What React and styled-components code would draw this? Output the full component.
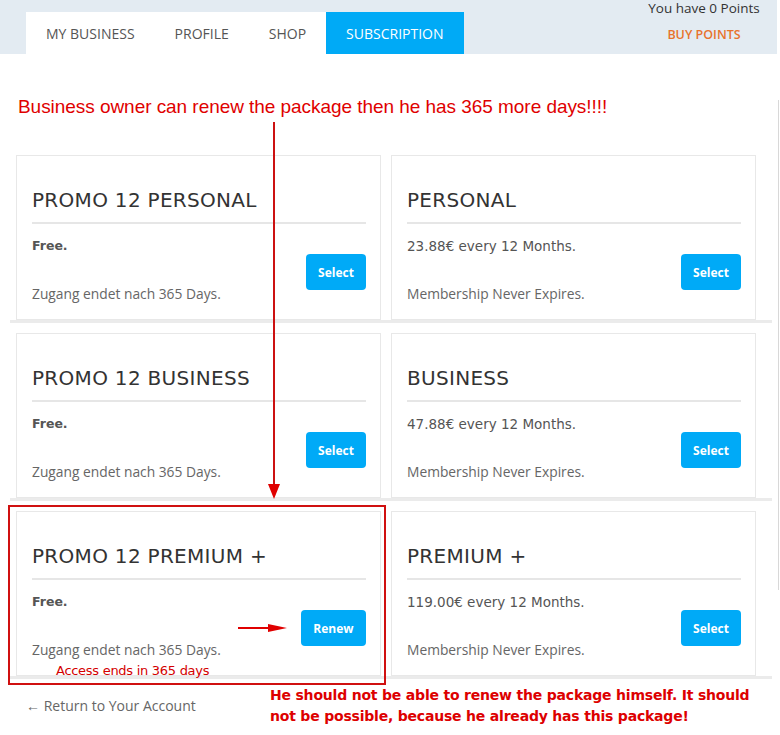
import React from "react";
import styled, { createGlobalStyle } from "styled-components";

const Global = createGlobalStyle`
  html, body { margin: 0; padding: 0; background: #fff; }
  body { font-family: "Open Sans", sans-serif; }
  * { box-sizing: border-box; }
`;

const Page = styled.div`
  position: relative;
  width: 780px;
  height: 735px;
  overflow: hidden;
  background: #fff;
`;

const Header = styled.header`
  display: flex;
  align-items: flex-end;
  height: 54px;
  width: 777px;
  padding-left: 26px;
  background: #e3ebf2;
`;

const Tabs = styled.nav`
  display: flex;
  height: 42px;
  background: #fff;
`;

const Tab = styled.div`
  display: flex;
  align-items: center;
  padding: 0 20px;
  font-family: "Open Sans", sans-serif;
  font-size: 14px;
  letter-spacing: 0;
  color: ${(p) => (p.$active ? "#fff" : "#555")};
  background: ${(p) => (p.$active ? "#00aaf6" : "transparent")};
`;

const Points = styled.div`
  margin-left: auto;
  align-self: stretch;
  width: 146px;
  display: flex;
  flex-direction: column;
  align-items: center;
  font-family: "Open Sans", sans-serif;
`;

const PointsText = styled.div`
  font-size: 13.5px;
  color: #333;
  line-height: 17px;
`;

const BuyPoints = styled.div`
  margin-top: 9px;
  font-size: 12.5px;
  font-weight: 600;
  color: #e8732c;
`;

const Main = styled.main`
  padding: 101px 0 0 10px;
  width: 772px;
`;

const Row = styled.section`
  display: grid;
  grid-template-columns: 365px 365px;
  column-gap: 10px;
  padding: 0 7px 0 6px;
  border-bottom: 3px solid #ebebeb;
  margin-bottom: 10px;
`;

const Card = styled.article`
  display: flex;
  flex-direction: column;
  height: 165px;
  padding: 32px 14px 0 15px;
  border: 1px solid #e8e8e8;
  background: #fff;
`;

const Title = styled.h2`
  margin: 0;
  padding-bottom: 9px;
  border-bottom: 2px solid #e6e6e6;
  font-family: "DejaVu Sans", sans-serif;
  font-weight: 400;
  font-size: 20px;
  line-height: 25px;
  letter-spacing: 0.3px;
  color: #333;
`;

const Body = styled.div`
  display: flex;
  justify-content: space-between;
  margin-top: 13px;
`;

const Info = styled.div`
  display: flex;
  flex-direction: column;
  gap: 30px;
`;

const Price = styled.div`
  font-family: "DejaVu Sans", sans-serif;
  font-size: ${(p) => (p.$free ? "12.5px" : "13.5px")};
  line-height: 18px;
  font-weight: ${(p) => (p.$free ? 700 : 400)};
  color: #555;
`;

const Note = styled.div`
  font-family: "Open Sans", sans-serif;
  font-size: 13.8px;
  line-height: 18px;
  color: #666;
`;

const Button = styled.button`
  align-self: flex-start;
  margin-top: 17px;
  width: ${(p) => p.$w || 60}px;
  height: 36px;
  border: 0;
  border-radius: 4px;
  background: #00aaf7;
  color: #fff;
  font-family: "Open Sans", sans-serif;
  font-weight: 700;
  font-size: 12px;
  padding: 0;
`;

const Back = styled.div`
  margin: 17px 0 0 16px;
  font-family: "Open Sans", sans-serif;
  font-size: 14px;
  color: #666;
`;

const Overlay = styled.svg`
  position: absolute;
  left: 0;
  top: 0;
  pointer-events: none;
`;

const Headline = styled.div`
  position: absolute;
  left: 18px;
  top: 96px;
  font-family: "Liberation Sans", Arial, sans-serif;
  font-size: 19px;
  letter-spacing: -0.05px;
  color: #e00000;
`;

const AccessNote = styled.div`
  position: absolute;
  left: 56px;
  top: 663px;
  font-family: "DejaVu Sans", sans-serif;
  font-size: 13px;
  letter-spacing: -0.28px;
  color: #d40000;
`;

const Complaint = styled.div`
  position: absolute;
  left: 270px;
  top: 685px;
  font-family: "DejaVu Sans", sans-serif;
  font-weight: 700;
  font-size: 14px;
  line-height: 21px;
  letter-spacing: -0.2px;
  color: #dd0000;
`;

const ScrollLine = styled.div`
  position: absolute;
  right: 1px;
  top: 100px;
  width: 1px;
  height: 490px;
  background: #d8d8d8;
`;

const plans = [
  [
    { title: "PROMO 12 PERSONAL", price: "Free.", free: true, note: "Zugang endet nach 365 Days." },
    { title: "PERSONAL", price: "23.88€ every 12 Months.", note: "Membership Never Expires." },
  ],
  [
    { title: "PROMO 12 BUSINESS", price: "Free.", free: true, note: "Zugang endet nach 365 Days." },
    { title: "BUSINESS", price: "47.88€ every 12 Months.", note: "Membership Never Expires." },
  ],
  [
    { title: "PROMO 12 PREMIUM +", price: "Free.", free: true, note: "Zugang endet nach 365 Days.", renew: true },
    { title: "PREMIUM +", price: "119.00€ every 12 Months.", note: "Membership Never Expires." },
  ],
];

export default function App() {
  return (
    <Page>
      <Global />
      <Header>
        <Tabs>
          <Tab>MY BUSINESS</Tab>
          <Tab>PROFILE</Tab>
          <Tab>SHOP</Tab>
          <Tab $active>SUBSCRIPTION</Tab>
        </Tabs>
        <Points>
          <PointsText>You have 0 Points</PointsText>
          <BuyPoints>BUY POINTS</BuyPoints>
        </Points>
      </Header>
      <Main>
        {plans.map((row, i) => (
          <Row key={i}>
            {row.map((p) => (
              <Card key={p.title}>
                <Title>{p.title}</Title>
                <Body>
                  <Info>
                    <Price $free={p.free}>{p.price}</Price>
                    <Note>{p.note}</Note>
                  </Info>
                  {p.renew ? <Button $w={65}>Renew</Button> : <Button>Select</Button>}
                </Body>
              </Card>
            ))}
          </Row>
        ))}
        <Back>← Return to Your Account</Back>
      </Main>

      <ScrollLine />
      <Headline>Business owner can renew the package then he has 365 more days!!!!</Headline>
      <Overlay width="780" height="735" viewBox="0 0 780 735">
        <line x1="274" y1="122" x2="274" y2="488" stroke="#cc1111" strokeWidth="2" />
        <polygon points="268,484 280,484 274,499" fill="#e00000" />
        <rect x="9" y="506" width="376" height="178" fill="none" stroke="#d01010" strokeWidth="2" />
        <line x1="238" y1="628" x2="276" y2="628" stroke="#e00000" strokeWidth="2" />
        <polygon points="268,624 287,628 268,632" fill="#e00000" />
      </Overlay>
      <AccessNote>Access ends in 365 days</AccessNote>
      <Complaint>
        He should not be able to renew the package himself. It should
        <br />
        not be possible, because he already has this package!
      </Complaint>
    </Page>
  );
}
